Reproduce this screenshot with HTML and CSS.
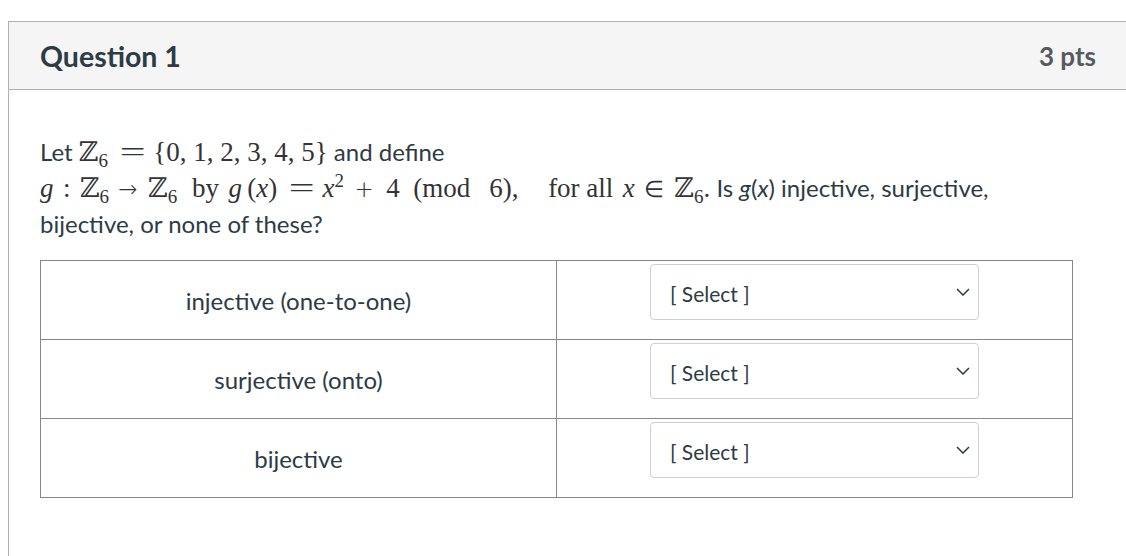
FILE: index.html
```html
<!DOCTYPE html>
<html>
<head>
<meta charset="utf-8">
<link rel="stylesheet" href="styles.css">
</head>
<body>
<div class="card">
  <div class="card-header">
    <h2 class="title">Question 1</h2>
    <span class="pts">3 pts</span>
  </div>
  <div class="card-body">
    <p class="question">Let <span class="math">ℤ<sub>6</sub><span class="eq">=</span>{0, 1, 2, 3, 4, 5}</span> and define<br><span class="math"><i>g</i><span class="colon">:</span>ℤ<sub>6</sub><span class="rel">→</span>ℤ<sub>6</sub><span class="txt">by</span><i>g</i>&#8201;(<i>x</i>)<span class="eq">=</span><i>x</i><sup>2</sup><span class="bin">+</span>4<span class="mod">(mod&nbsp;&nbsp;6),</span><span class="txt txt-for">for all</span><i>x</i><span class="rel">∈</span>ℤ<sub>6</sub>.</span> Is <i>g</i>(<i>x</i>) injective, surjective, bijective, or none of these?</p>
    <table class="answers">
      <tr>
        <td class="label">injective (one-to-one)</td>
        <td class="choice"><div class="select"><span>[ Select ]</span><svg width="14" height="8" viewBox="0 0 14 8"><polyline points="1,1 7,7 13,1" fill="none" stroke="#2d3b45" stroke-width="1.5"/></svg></div></td>
      </tr>
      <tr>
        <td class="label">surjective (onto)</td>
        <td class="choice"><div class="select"><span>[ Select ]</span><svg width="14" height="8" viewBox="0 0 14 8"><polyline points="1,1 7,7 13,1" fill="none" stroke="#2d3b45" stroke-width="1.5"/></svg></div></td>
      </tr>
      <tr>
        <td class="label">bijective</td>
        <td class="choice"><div class="select"><span>[ Select ]</span><svg width="14" height="8" viewBox="0 0 14 8"><polyline points="1,1 7,7 13,1" fill="none" stroke="#2d3b45" stroke-width="1.5"/></svg></div></td>
      </tr>
    </table>
  </div>
</div>
</body>
</html>
```
FILE: styles.css
```css
html, body {
  margin: 0;
  padding: 0;
  background: #fff;
  overflow: hidden;
  height: 556px;
}
body {
  font-family: Lato, "Liberation Sans", sans-serif;
  color: #2d3b45;
}
.card {
  margin: 21px 0 0 8px;
  border: 1px solid #b0b0b0;
  border-right: none;
  border-bottom: none;
  height: 535px;
  box-sizing: border-box;
}
.card-header {
  background: #f5f5f5;
  border-bottom: 1px solid #b0b0b0;
  height: 67px;
  display: flex;
  align-items: center;
  justify-content: space-between;
  padding: 0 30px 0 31px;
}
.title {
  margin: 0;
  font-size: 28.5px;
  font-weight: 700;
  color: #2d3b45;
}
.pts {
  font-size: 26px;
  font-weight: 700;
  color: #555a5f;
}
.card-body {
  padding: 44px 0 0 31px;
  width: 1033px;
}
.question {
  margin: 0;
  font-size: 24px;
  line-height: 36px;
}
.math {
  font-family: "Liberation Serif", "DejaVu Serif", serif;
  font-size: 27px;
  line-height: 0;
  white-space: nowrap;
  color: #333;
}
.math sub, .math sup {
  font-size: 19px;
  line-height: 0;
}
.rel, .bin {
  font-family: "DejaVu Sans", sans-serif;
  font-size: 23px;
  font-weight: 300;
  line-height: 0;
  margin: 0 0.45em 0 0.4em;
}
.eq {
  display: inline-block;
  line-height: 0;
  transform: scaleX(1.7);
  margin: 0 13px 0 17px;
}
.bin {
  margin: 0 0.55em 0 0.45em;
}
.colon {
  margin: 0 0.35em;
}
.txt {
  margin: 0 0.35em 0 0.55em;
}
.txt-for {
  margin-left: 0.8em;
}
.mod {
  margin: 0 0.3em 0 0.5em;
  word-spacing: 0.1em;
}
.answers {
  margin-top: 18px;
  width: 1033px;
  border-collapse: collapse;
  table-layout: fixed;
}
.answers td {
  border: 1px solid #888;
  height: 78px;
  padding: 0;
  font-size: 24px;
}
.label {
  text-align: center;
  vertical-align: middle;
}
.choice {
  vertical-align: top;
}
.select {
  margin: 3px auto 0;
  box-sizing: border-box;
  width: 329px;
  height: 56px;
  border: 1px solid #ccd0d3;
  border-radius: 4px;
  display: flex;
  align-items: center;
  justify-content: space-between;
  padding: 0 8px 0 19px;
  font-size: 21px;
  color: #2d3b45;
}
.select span {
  margin-top: 2px;
}
```
